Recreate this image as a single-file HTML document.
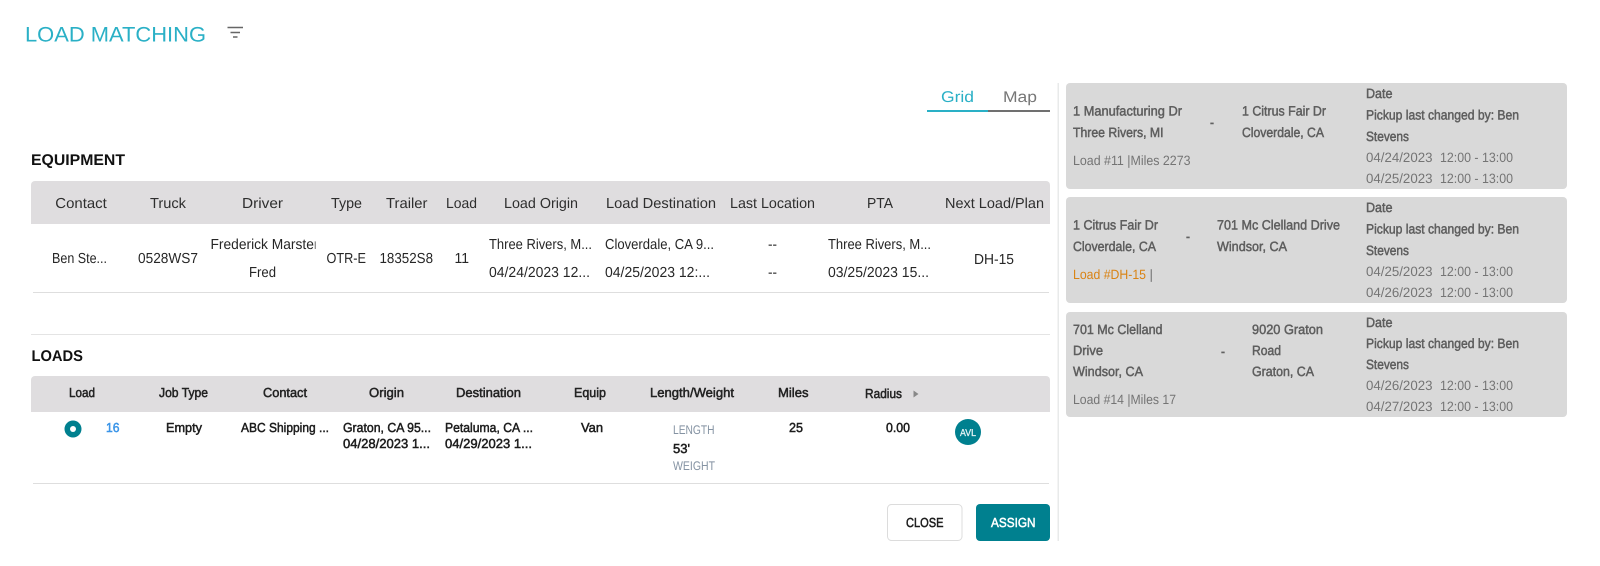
<!DOCTYPE html>
<html lang="en">
<head>
<meta charset="utf-8">
<title>Load Matching</title>
<style>
html,body{margin:0;padding:0;background:#fff;width:1600px;height:566px;overflow:hidden}
svg{display:block}
text{font-family:"Liberation Sans",sans-serif;white-space:pre;text-rendering:geometricPrecision}
.h{font-size:14.5px;fill:#2e2e2e}
.r{font-size:14.5px;fill:#262626}
.s{font-size:15.5px;font-weight:bold;fill:#111}
.lh{font-size:13px;fill:#222;stroke:#222;stroke-width:.5px}
.lr{font-size:13px;fill:#1c1c1c;stroke:#1c1c1c;stroke-width:.5px}
.g{font-size:12.5px;fill:#8593a3}
.cb{font-size:13.5px;fill:#5e5e5e;stroke:#5e5e5e;stroke-width:.5px}
.cr{font-size:13.5px;fill:#747474}
.o{font-size:13.5px;fill:#d98314}
</style>
</head>
<body>
<svg width="1600" height="566" viewBox="0 0 1600 566" xmlns="http://www.w3.org/2000/svg">
<defs><clipPath id="drv"><rect x="200" y="230" width="115.5" height="30"/></clipPath></defs>
<rect width="1600" height="566" fill="#fff"/>

<text x="25" y="41.5" font-size="21" fill="#2ab0c6" textLength="181" lengthAdjust="spacingAndGlyphs">LOAD MATCHING</text>
<path d="M227.5 27.5H243M230.5 32.5H240M233 37H237.5" stroke="#666" stroke-width="1.4" fill="none"/>

<text x="941" y="102" font-size="15.5" fill="#2ab0c6" textLength="33" lengthAdjust="spacingAndGlyphs">Grid</text>
<text x="1003" y="102" font-size="15.5" fill="#777" textLength="34" lengthAdjust="spacingAndGlyphs">Map</text>
<rect x="927" y="110" width="61" height="2" fill="#2ab0c6"/>
<rect x="988" y="110" width="62" height="2" fill="#707070"/>

<text class="s" x="31" y="165" textLength="94" lengthAdjust="spacingAndGlyphs">EQUIPMENT</text>
<path d="M31 224V185a4 4 0 0 1 4-4H1046a4 4 0 0 1 4 4V224Z" fill="#dfdddf"/>
<text class="h" x="55.3" y="208" textLength="51.5" lengthAdjust="spacingAndGlyphs">Contact</text>
<text class="h" x="150" y="208" textLength="36" lengthAdjust="spacingAndGlyphs">Truck</text>
<text class="h" x="242" y="208" textLength="41" lengthAdjust="spacingAndGlyphs">Driver</text>
<text class="h" x="331" y="208" textLength="31" lengthAdjust="spacingAndGlyphs">Type</text>
<text class="h" x="386" y="208" textLength="41.5" lengthAdjust="spacingAndGlyphs">Trailer</text>
<text class="h" x="446" y="208" textLength="31" lengthAdjust="spacingAndGlyphs">Load</text>
<text class="h" x="504" y="208" textLength="74" lengthAdjust="spacingAndGlyphs">Load Origin</text>
<text class="h" x="606" y="208" textLength="110" lengthAdjust="spacingAndGlyphs">Load Destination</text>
<text class="h" x="730" y="208" textLength="85" lengthAdjust="spacingAndGlyphs">Last Location</text>
<text class="h" x="867" y="208" textLength="26" lengthAdjust="spacingAndGlyphs">PTA</text>
<text class="h" x="945" y="208" textLength="99" lengthAdjust="spacingAndGlyphs">Next Load/Plan</text>

<text class="r" x="52" y="263" textLength="55" lengthAdjust="spacingAndGlyphs">Ben Ste...</text>
<text class="r" x="138" y="263" textLength="60" lengthAdjust="spacingAndGlyphs">0528WS7</text>
<g clip-path="url(#drv)"><text class="r" x="210.5" y="249" textLength="108" lengthAdjust="spacingAndGlyphs">Frederick Marster</text></g>
<text class="r" x="249" y="277" textLength="27" lengthAdjust="spacingAndGlyphs">Fred</text>
<text class="r" x="326.5" y="263" textLength="39.5" lengthAdjust="spacingAndGlyphs">OTR-E</text>
<text class="r" x="379.5" y="263" textLength="53.5" lengthAdjust="spacingAndGlyphs">18352S8</text>
<text class="r" x="454.5" y="263" textLength="14.5" lengthAdjust="spacingAndGlyphs">11</text>
<text class="r" x="489" y="249" textLength="103" lengthAdjust="spacingAndGlyphs">Three Rivers, M...</text>
<text class="r" x="489" y="277" textLength="101" lengthAdjust="spacingAndGlyphs">04/24/2023 12...</text>
<text class="r" x="605" y="249" textLength="109" lengthAdjust="spacingAndGlyphs">Cloverdale, CA 9...</text>
<text class="r" x="605" y="277" textLength="105" lengthAdjust="spacingAndGlyphs">04/25/2023 12:...</text>
<text class="r" x="768" y="249" textLength="9" lengthAdjust="spacingAndGlyphs">--</text>
<text class="r" x="768" y="277" textLength="9" lengthAdjust="spacingAndGlyphs">--</text>
<text class="r" x="828" y="249" textLength="103" lengthAdjust="spacingAndGlyphs">Three Rivers, M...</text>
<text class="r" x="828" y="277" textLength="101" lengthAdjust="spacingAndGlyphs">03/25/2023 15...</text>
<text class="r" x="974" y="264" textLength="40" lengthAdjust="spacingAndGlyphs">DH-15</text>
<rect x="33" y="292" width="1016" height="1" fill="#dedede"/>

<rect x="31" y="334" width="1019" height="1" fill="#e4e4e4"/>
<text class="s" x="31.5" y="361" textLength="51.5" lengthAdjust="spacingAndGlyphs">LOADS</text>
<path d="M31 412V380a4 4 0 0 1 4-4H1046a4 4 0 0 1 4 4V412Z" fill="#dfdddf"/>
<text class="lh" x="69" y="397" textLength="26" lengthAdjust="spacingAndGlyphs">Load</text>
<text class="lh" x="159" y="397" textLength="49" lengthAdjust="spacingAndGlyphs">Job Type</text>
<text class="lh" x="263" y="397" textLength="44" lengthAdjust="spacingAndGlyphs">Contact</text>
<text class="lh" x="369" y="397" textLength="35" lengthAdjust="spacingAndGlyphs">Origin</text>
<text class="lh" x="456" y="397" textLength="65" lengthAdjust="spacingAndGlyphs">Destination</text>
<text class="lh" x="574" y="397" textLength="32" lengthAdjust="spacingAndGlyphs">Equip</text>
<text class="lh" x="650" y="397" textLength="84" lengthAdjust="spacingAndGlyphs">Length/Weight</text>
<text class="lh" x="778" y="397" textLength="30.5" lengthAdjust="spacingAndGlyphs">Miles</text>
<text class="lh" x="865" y="398" textLength="37" lengthAdjust="spacingAndGlyphs">Radius</text>
<path d="M913.5 390.5L918.5 394L913.5 397.5Z" fill="#888"/>

<circle cx="73" cy="429" r="8.5" fill="#00808f"/>
<circle cx="73" cy="429" r="3" fill="#fff"/>
<text x="106" y="432" font-size="13" fill="#3b95e8" stroke="#3b95e8" stroke-width=".5" textLength="13.5" lengthAdjust="spacingAndGlyphs">16</text>
<text class="lr" x="166" y="432" textLength="36" lengthAdjust="spacingAndGlyphs">Empty</text>
<text class="lr" x="241" y="432" textLength="88" lengthAdjust="spacingAndGlyphs">ABC Shipping ...</text>
<text class="lr" x="343" y="432" textLength="88" lengthAdjust="spacingAndGlyphs">Graton, CA 95...</text>
<text class="lr" x="343" y="448" textLength="87" lengthAdjust="spacingAndGlyphs">04/28/2023 1...</text>
<text class="lr" x="445" y="432" textLength="88" lengthAdjust="spacingAndGlyphs">Petaluma, CA ...</text>
<text class="lr" x="445" y="448" textLength="87" lengthAdjust="spacingAndGlyphs">04/29/2023 1...</text>
<text class="lr" x="581" y="432" textLength="22" lengthAdjust="spacingAndGlyphs">Van</text>
<text class="g" x="673" y="434" textLength="41.5" lengthAdjust="spacingAndGlyphs">LENGTH</text>
<text class="lr" x="673" y="453" textLength="17" lengthAdjust="spacingAndGlyphs">53'</text>
<text class="g" x="673" y="470" textLength="42" lengthAdjust="spacingAndGlyphs">WEIGHT</text>
<text class="lr" x="789" y="432" textLength="14" lengthAdjust="spacingAndGlyphs">25</text>
<text class="lr" x="886" y="432" textLength="24" lengthAdjust="spacingAndGlyphs">0.00</text>
<circle cx="968" cy="432" r="13" fill="#00808f"/>
<text x="960" y="436" font-size="10" fill="#e8f4f5" stroke="#e8f4f5" stroke-width=".3" textLength="16" lengthAdjust="spacingAndGlyphs">AVL</text>
<rect x="33" y="483" width="1016" height="1" fill="#dedede"/>

<rect x="887.5" y="504.5" width="74.5" height="36" rx="4" fill="#fff" stroke="#dcdcdc"/>
<text class="lr" x="906" y="527" textLength="37.5" lengthAdjust="spacingAndGlyphs">CLOSE</text>
<rect x="976" y="504" width="74" height="37" rx="4" fill="#00808f"/>
<text x="991" y="527" font-size="13" fill="#fff" stroke="#fff" stroke-width=".5" textLength="44.5" lengthAdjust="spacingAndGlyphs">ASSIGN</text>

<rect x="1057.5" y="83" width="1.5" height="458" fill="#e8eaea"/>

<!-- Card 1 -->
<rect x="1066" y="83" width="501" height="106" rx="4" fill="#d9d9d9"/>
<text class="cb" x="1073" y="115.5" textLength="109" lengthAdjust="spacingAndGlyphs">1 Manufacturing Dr</text>
<text class="cb" x="1073" y="137" textLength="90.5" lengthAdjust="spacingAndGlyphs">Three Rivers, MI</text>
<text class="cr" x="1073" y="165" textLength="117.5" lengthAdjust="spacingAndGlyphs">Load #11 |Miles 2273</text>
<text class="cb" x="1210" y="127" textLength="4" lengthAdjust="spacingAndGlyphs">-</text>
<text class="cb" x="1242" y="115.5" textLength="84" lengthAdjust="spacingAndGlyphs">1 Citrus Fair Dr</text>
<text class="cb" x="1242" y="137" textLength="82" lengthAdjust="spacingAndGlyphs">Cloverdale, CA</text>
<text class="cb" x="1366" y="98" textLength="26.5" lengthAdjust="spacingAndGlyphs">Date</text>
<text class="cb" x="1366" y="119.5" textLength="153" lengthAdjust="spacingAndGlyphs">Pickup last changed by: Ben</text>
<text class="cb" x="1366" y="141" textLength="43" lengthAdjust="spacingAndGlyphs">Stevens</text>
<text class="cr" x="1366" y="162" textLength="66.5" lengthAdjust="spacingAndGlyphs">04/24/2023</text>
<text class="cr" x="1440" y="162" textLength="73" lengthAdjust="spacingAndGlyphs">12:00 - 13:00</text>
<text class="cr" x="1366" y="183" textLength="66.5" lengthAdjust="spacingAndGlyphs">04/25/2023</text>
<text class="cr" x="1440" y="183" textLength="73" lengthAdjust="spacingAndGlyphs">12:00 - 13:00</text>

<!-- Card 2 -->
<rect x="1066" y="197" width="501" height="106" rx="4" fill="#d9d9d9"/>
<text class="cb" x="1073" y="229.5" textLength="85" lengthAdjust="spacingAndGlyphs">1 Citrus Fair Dr</text>
<text class="cb" x="1073" y="251" textLength="83" lengthAdjust="spacingAndGlyphs">Cloverdale, CA</text>
<text class="o" x="1073" y="279" textLength="73" lengthAdjust="spacingAndGlyphs">Load #DH-15</text>
<text class="cr" x="1149.5" y="279">|</text>
<text class="cb" x="1186" y="241" textLength="4" lengthAdjust="spacingAndGlyphs">-</text>
<text class="cb" x="1217" y="229.5" textLength="123" lengthAdjust="spacingAndGlyphs">701 Mc Clelland Drive</text>
<text class="cb" x="1217" y="251" textLength="70" lengthAdjust="spacingAndGlyphs">Windsor, CA</text>
<text class="cb" x="1366" y="212" textLength="26.5" lengthAdjust="spacingAndGlyphs">Date</text>
<text class="cb" x="1366" y="233.5" textLength="153" lengthAdjust="spacingAndGlyphs">Pickup last changed by: Ben</text>
<text class="cb" x="1366" y="255" textLength="43" lengthAdjust="spacingAndGlyphs">Stevens</text>
<text class="cr" x="1366" y="276" textLength="66.5" lengthAdjust="spacingAndGlyphs">04/25/2023</text>
<text class="cr" x="1440" y="276" textLength="73" lengthAdjust="spacingAndGlyphs">12:00 - 13:00</text>
<text class="cr" x="1366" y="297" textLength="66.5" lengthAdjust="spacingAndGlyphs">04/26/2023</text>
<text class="cr" x="1440" y="297" textLength="73" lengthAdjust="spacingAndGlyphs">12:00 - 13:00</text>

<!-- Card 3 -->
<rect x="1066" y="312" width="501" height="105" rx="4" fill="#d9d9d9"/>
<text class="cb" x="1073" y="334" textLength="89.5" lengthAdjust="spacingAndGlyphs">701 Mc Clelland</text>
<text class="cb" x="1073" y="355" textLength="30" lengthAdjust="spacingAndGlyphs">Drive</text>
<text class="cb" x="1073" y="376" textLength="70" lengthAdjust="spacingAndGlyphs">Windsor, CA</text>
<text class="cr" x="1073" y="404" textLength="103" lengthAdjust="spacingAndGlyphs">Load #14 |Miles 17</text>
<text class="cb" x="1221" y="356" textLength="4" lengthAdjust="spacingAndGlyphs">-</text>
<text class="cb" x="1252" y="334" textLength="71" lengthAdjust="spacingAndGlyphs">9020 Graton</text>
<text class="cb" x="1252" y="355" textLength="29" lengthAdjust="spacingAndGlyphs">Road</text>
<text class="cb" x="1252" y="376" textLength="62" lengthAdjust="spacingAndGlyphs">Graton, CA</text>
<text class="cb" x="1366" y="327" textLength="26.5" lengthAdjust="spacingAndGlyphs">Date</text>
<text class="cb" x="1366" y="348" textLength="153" lengthAdjust="spacingAndGlyphs">Pickup last changed by: Ben</text>
<text class="cb" x="1366" y="369" textLength="43" lengthAdjust="spacingAndGlyphs">Stevens</text>
<text class="cr" x="1366" y="390" textLength="66.5" lengthAdjust="spacingAndGlyphs">04/26/2023</text>
<text class="cr" x="1440" y="390" textLength="73" lengthAdjust="spacingAndGlyphs">12:00 - 13:00</text>
<text class="cr" x="1366" y="411" textLength="66.5" lengthAdjust="spacingAndGlyphs">04/27/2023</text>
<text class="cr" x="1440" y="411" textLength="73" lengthAdjust="spacingAndGlyphs">12:00 - 13:00</text>
</svg>
</body>
</html>
